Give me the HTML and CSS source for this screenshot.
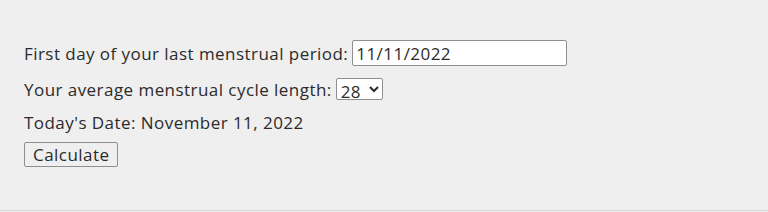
FILE: index.html
```html
<!DOCTYPE html>
<html lang="en">
<head>
  <meta charset="UTF-8">
  <title>Ovulation Calculator</title>
  <link rel="stylesheet" href="styles.css">
</head>
<body>

  <div class="calc-panel">
    <div class="calc-row field-row">
      <label for="last-period">First day of your last menstrual period:</label>
      <input type="text" id="last-period" class="date-input" value="11/11/2022">
    </div>

    <div class="calc-row field-row">
      <label for="cycle-length">Your average menstrual cycle length:</label>
      <select id="cycle-length" class="cycle-select">
        <option>28</option>
      </select>
    </div>

    <div class="calc-row today-row">Today's Date: November 11, 2022</div>

    <div class="calc-row">
      <button class="calc-button">Calculate</button>
    </div>
  </div>

</body>
</html>
```

FILE: styles.css
```css
* {
  margin: 0;
  padding: 0;
  box-sizing: border-box;
}

body {
  font-family: "Open Sans", Arial, sans-serif;
  background-color: #efefef;
  color: #2b2b2b;
  height: 212px;
}

.calc-panel {
  height: 211px;
  border-bottom: 1px solid #d9d9d9;
  padding: 40px 24px 0;
  display: flex;
  flex-direction: column;
  align-items: flex-start;
  gap: 10px;
  font-size: 17px;
  letter-spacing: 0.45px;
}

.calc-row {
  display: flex;
  align-items: center;
  gap: 4px;
}

.field-row {
  height: 26px;
}

.today-row {
  height: 20px;
}

.date-input {
  width: 215px;
  height: 26px;
  padding: 0 3px;
  font: inherit;
  letter-spacing: inherit;
  color: #2b2b2b;
  background: #fff;
  border: 1px solid #8f8f8f;
  border-radius: 2px;
}

.cycle-select {
  width: 47px;
  height: 22px;
  font: inherit;
  letter-spacing: inherit;
  color: #2b2b2b;
  background: #fff;
  border: 1px solid #8f8f8f;
  border-radius: 2px;
}

.calc-button {
  padding: 0 8px;
  height: 25px;
  font: inherit;
  letter-spacing: inherit;
  color: #2b2b2b;
  background: #efefef;
  border: 1px solid #8f8f8f;
  border-radius: 2px;
}
```
